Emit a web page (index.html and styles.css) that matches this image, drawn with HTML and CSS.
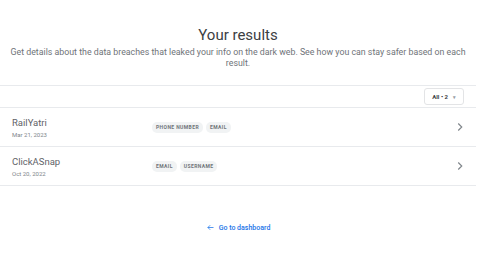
FILE: index.html
```html
<!DOCTYPE html>
<html lang="en">
<head>
    <meta charset="UTF-8"/>
    <title>Your results</title>
    <link rel="stylesheet" href="styles.css">
</head>
<body>
    <div class="page">
        <div class="header">
            <h1 class="title">Your results</h1>
            <p class="subtitle">Get details about the data breaches that leaked your info on the dark web. See how you can stay safer based on each result.</p>
        </div>

        <div class="toolbar">
            <button class="filter">All &bull; 2 <span class="caret">&#9662;</span></button>
        </div>

        <div class="results">
            <div class="row">
                <div class="site">
                    <div class="site-name">RailYatri</div>
                    <div class="site-date">Mar 21, 2023</div>
                </div>
                <div class="chips">
                    <span class="chip">Phone number</span>
                    <span class="chip">Email</span>
                </div>
                <svg class="chevron" viewBox="0 0 24 24" width="14" height="14"><path d="M9 6l6 6-6 6" fill="none" stroke="#80868b" stroke-width="2"/></svg>
            </div>
            <div class="row">
                <div class="site">
                    <div class="site-name">ClickASnap</div>
                    <div class="site-date">Oct 20, 2022</div>
                </div>
                <div class="chips">
                    <span class="chip">Email</span>
                    <span class="chip">Username</span>
                </div>
                <svg class="chevron" viewBox="0 0 24 24" width="14" height="14"><path d="M9 6l6 6-6 6" fill="none" stroke="#80868b" stroke-width="2"/></svg>
            </div>
        </div>

        <div class="footer">
            <a class="back" href="javascript:void(0)">
                <svg viewBox="0 0 24 24" width="9" height="9"><path d="M20 12H5M11 6l-6 6 6 6" fill="none" stroke="#1a73e8" stroke-width="2"/></svg>
                Go to dashboard
            </a>
        </div>
    </div>
</body>
</html>
```

FILE: styles.css
```css
body {
    margin: 0;
    padding: 0;
    font-family: Roboto, "Open Sans", Arial, sans-serif;
    background-color: #fff;
    color: #202124;
}

.page {
    width: 476px;
}

.header {
    text-align: center;
    padding-top: 26px;
}

.title {
    margin: 0;
    font-size: 15px;
    line-height: 18px;
    font-weight: 400;
    color: #3c4043;
}

.subtitle {
    margin: 3px 6px 0;
    font-size: 8.8px;
    line-height: 11px;
    color: #6f7378;
}

.toolbar {
    display: flex;
    justify-content: flex-end;
    border-top: 1px solid #e8eaed;
    margin-top: 16px;
    padding: 2px 12px 2px 0;
}

.filter {
    display: flex;
    align-items: center;
    gap: 5px;
    height: 17px;
    padding: 0 7px;
    border: 1px solid #e3e4e6;
    border-radius: 3px;
    background-color: #fff;
    font-family: inherit;
    font-size: 6px;
    font-weight: 700;
    color: #3c4043;
}

.caret {
    font-size: 5px;
    color: #9aa0a6;
}

.results {
    border-top: 1px solid #e8eaed;
}

.row {
    display: flex;
    align-items: center;
    height: 38px;
    border-bottom: 1px solid #e8eaed;
    padding: 0 12px;
}

.site {
    width: 140px;
}

.site-name {
    font-size: 9.5px;
    color: #5f6368;
}

.site-date {
    margin-top: 3px;
    font-size: 6px;
    color: #80868b;
}

.chips {
    display: flex;
    gap: 3px;
    flex: 1;
}

.chip {
    background-color: #f1f3f4;
    border-radius: 5px;
    padding: 2.5px 4px;
    font-size: 5px;
    font-weight: 700;
    letter-spacing: 0.4px;
    text-transform: uppercase;
    color: #70757a;
}

.chevron {
    margin-right: -3px;
}

.footer {
    display: flex;
    justify-content: center;
    padding-top: 37px;
}

.back {
    display: flex;
    align-items: center;
    gap: 4px;
    font-size: 7px;
    font-weight: 500;
    color: #1a73e8;
    text-decoration: none;
}
```
